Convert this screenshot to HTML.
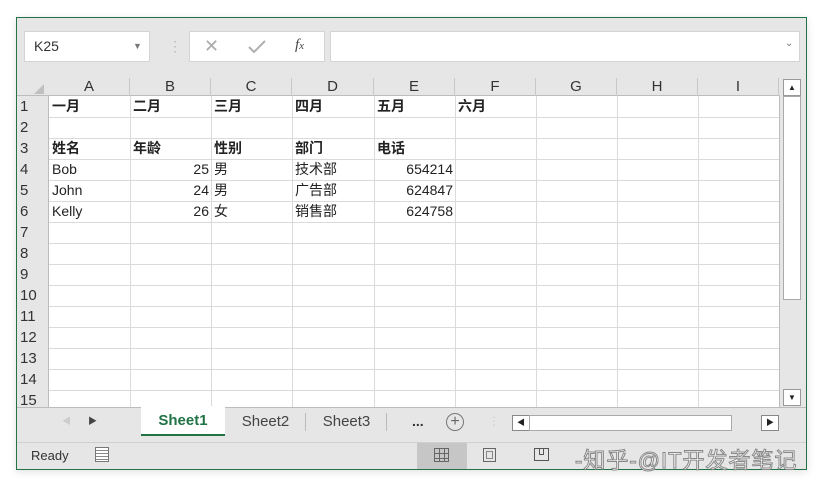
<!DOCTYPE html>
<html><head><meta charset="utf-8"><style>
*{margin:0;padding:0;box-sizing:border-box}
body{width:825px;height:489px;background:#fff;position:relative;overflow:hidden;font-family:"Liberation Sans","Noto Sans CJK SC",sans-serif;font-size:14px;color:#222}
.a{position:absolute}
#win{left:16px;top:17px;width:791px;height:453px;border:1px solid #217346;background:#e6e6e6;box-shadow:0 2px 8px rgba(0,0,0,.12)}
.box{background:#fff;border:1px solid #d4d4d4}
.cell{position:absolute;height:21px;line-height:21px;font-size:14px;white-space:nowrap}
.b{font-weight:bold}
.hl{position:absolute;height:1px;background:#dadada;left:49px;width:730px}
.vl{position:absolute;width:1px;background:#dadada;top:96px;height:311px}
.ch{position:absolute;top:78px;height:18px;line-height:18px;text-align:center;font-size:15px;color:#333;border-right:1px solid #c8c8c8}
.rh{position:absolute;left:17px;width:32px;height:21px;line-height:21px;font-size:15px;color:#333;padding-left:3px}
</style></head><body>
<div id="win" class="a"></div>
<div class="a box" style="left:24px;top:31px;width:126px;height:31px;line-height:29px;padding-left:9px;font-size:14px;color:#333">K25<span class="a" style="left:108px;top:0;font-size:9px;color:#777">▼</span></div>
<div class="a" style="left:168px;top:37px;color:#bbb;font-size:14px;line-height:18px">⋮</div>
<div class="a box" style="left:189px;top:31px;width:136px;height:31px"></div>
<div class="a" style="left:204px;top:36px;color:#aaa;font-size:18px">✕</div>
<svg class="a" style="left:247px;top:39px" width="20" height="16"><path d="M2 8 L7 13 L18 2" stroke="#b0b0b0" stroke-width="2" fill="none"/></svg>
<div class="a" style="left:295px;top:37px;font-family:'Liberation Serif',serif;font-style:italic;font-size:15px;color:#444">f<span style="font-size:11px">x</span></div>
<div class="a box" style="left:330px;top:31px;width:470px;height:31px"></div>
<div class="a" style="left:785px;top:38px;font-size:10px;color:#777">⌄</div>
<div class="a" style="left:17px;top:78px;width:763px;height:18px;background:#e6e6e6;border-bottom:1px solid #bcbcbc"></div>
<div class="a" style="left:17px;top:96px;width:32px;height:311px;background:#e6e6e6;border-right:1px solid #bcbcbc"></div>
<div class="a" style="left:34px;top:84px;width:0;height:0;border-left:10px solid transparent;border-bottom:10px solid #c0c0c0"></div>
<div class="a" style="left:49px;top:96px;width:730px;height:311px;background:#fff"></div>
<div class="ch" style="left:49px;width:81px">A</div>
<div class="ch" style="left:130px;width:81px">B</div>
<div class="ch" style="left:211px;width:81px">C</div>
<div class="ch" style="left:292px;width:82px">D</div>
<div class="ch" style="left:374px;width:81px">E</div>
<div class="ch" style="left:455px;width:81px">F</div>
<div class="ch" style="left:536px;width:81px">G</div>
<div class="ch" style="left:617px;width:81px">H</div>
<div class="ch" style="left:698px;width:81px">I</div>
<div class="vl" style="left:130px"></div><div class="vl" style="left:211px"></div><div class="vl" style="left:292px"></div><div class="vl" style="left:374px"></div><div class="vl" style="left:455px"></div><div class="vl" style="left:536px"></div><div class="vl" style="left:617px"></div><div class="vl" style="left:698px"></div><div class="vl" style="left:779px;background:#bcbcbc"></div>
<div class="hl" style="top:117px"></div><div class="hl" style="top:138px"></div><div class="hl" style="top:159px"></div><div class="hl" style="top:180px"></div><div class="hl" style="top:201px"></div><div class="hl" style="top:222px"></div><div class="hl" style="top:243px"></div><div class="hl" style="top:264px"></div><div class="hl" style="top:285px"></div><div class="hl" style="top:306px"></div><div class="hl" style="top:327px"></div><div class="hl" style="top:348px"></div><div class="hl" style="top:369px"></div><div class="hl" style="top:390px"></div>
<div class="rh" style="top:96px">1</div><div class="rh" style="top:117px">2</div><div class="rh" style="top:138px">3</div><div class="rh" style="top:159px">4</div><div class="rh" style="top:180px">5</div><div class="rh" style="top:201px">6</div><div class="rh" style="top:222px">7</div><div class="rh" style="top:243px">8</div><div class="rh" style="top:264px">9</div><div class="rh" style="top:285px">10</div><div class="rh" style="top:306px">11</div><div class="rh" style="top:327px">12</div><div class="rh" style="top:348px">13</div><div class="rh" style="top:369px">14</div><div class="rh" style="top:390px;height:17px;overflow:hidden">15</div>
<div class="cell b" style="left:52px;top:96px">一月</div><div class="cell b" style="left:133px;top:96px">二月</div><div class="cell b" style="left:214px;top:96px">三月</div><div class="cell b" style="left:295px;top:96px">四月</div><div class="cell b" style="left:377px;top:96px">五月</div><div class="cell b" style="left:458px;top:96px">六月</div>
<div class="cell b" style="left:52px;top:138px">姓名</div><div class="cell b" style="left:133px;top:138px">年龄</div><div class="cell b" style="left:214px;top:138px">性别</div><div class="cell b" style="left:295px;top:138px">部门</div><div class="cell b" style="left:377px;top:138px">电话</div>
<div class="cell" style="left:52px;top:159px">Bob</div><div class="cell" style="left:130px;width:79px;text-align:right;top:159px">25</div><div class="cell" style="left:214px;top:159px">男</div><div class="cell" style="left:295px;top:159px">技术部</div><div class="cell" style="left:374px;width:79px;text-align:right;top:159px">654214</div>
<div class="cell" style="left:52px;top:180px">John</div><div class="cell" style="left:130px;width:79px;text-align:right;top:180px">24</div><div class="cell" style="left:214px;top:180px">男</div><div class="cell" style="left:295px;top:180px">广告部</div><div class="cell" style="left:374px;width:79px;text-align:right;top:180px">624847</div>
<div class="cell" style="left:52px;top:201px">Kelly</div><div class="cell" style="left:130px;width:79px;text-align:right;top:201px">26</div><div class="cell" style="left:214px;top:201px">女</div><div class="cell" style="left:295px;top:201px">销售部</div><div class="cell" style="left:374px;width:79px;text-align:right;top:201px">624758</div>
<div class="a" style="left:783px;top:79px;width:18px;height:328px;background:#e6e6e6"></div>
<div class="a" style="left:783px;top:79px;width:18px;height:17px;background:#fff;border:1px solid #999;font-size:8px;text-align:center;line-height:15px">▲</div>
<div class="a" style="left:783px;top:96px;width:18px;height:204px;background:#fff;border:1px solid #aaa"></div>
<div class="a" style="left:783px;top:389px;width:18px;height:17px;background:#fff;border:1px solid #999;font-size:8px;text-align:center;line-height:15px">▼</div>
<div class="a" style="left:17px;top:407px;width:789px;height:1px;background:#bcbcbc"></div>
<div class="a" style="left:62px;top:414px;color:#ccc;font-size:9px">◀</div>
<div class="a" style="left:88px;top:414px;color:#444;font-size:9px">▶</div>
<div class="a" style="left:141px;top:406px;width:84px;height:30px;background:#fff;border-bottom:2px solid #217346;color:#217346;font-weight:bold;font-size:15px;text-align:center;line-height:30px">Sheet1</div>
<div class="a" style="left:226px;top:413px;width:80px;text-align:center;font-size:15px;color:#444;line-height:18px;border-right:1px solid #bbb">Sheet2</div>
<div class="a" style="left:307px;top:413px;width:80px;text-align:center;font-size:15px;color:#444;line-height:18px;border-right:1px solid #bbb">Sheet3</div>
<div class="a" style="left:412px;top:413px;font-weight:bold;color:#333;font-size:14px">...</div>
<div class="a" style="left:446px;top:413px;width:18px;height:18px;border:1.5px solid #777;border-radius:50%;text-align:center;line-height:15px;font-size:16px;color:#666">+</div>
<div class="a" style="left:488px;top:414px;color:#ccc;font-size:12px">⋮</div>
<div class="a" style="left:512px;top:415px;width:18px;height:16px;background:#fff;border:1px solid #888;font-size:8px;text-align:center;line-height:14px">◀</div>
<div class="a" style="left:529px;top:415px;width:203px;height:16px;background:#fff;border:1px solid #aaa"></div>
<div class="a" style="left:761px;top:415px;width:18px;height:16px;background:#fff;border:1px solid #888;font-size:8px;text-align:center;line-height:14px">▶</div>
<div class="a" style="left:17px;top:442px;width:789px;height:1px;background:#d0d0d0"></div>
<div class="a" style="left:31px;top:448px;font-size:13px;color:#333">Ready</div>
<div class="a" style="left:95px;top:447px;width:14px;height:15px;border:1px solid #777;background:repeating-linear-gradient(#fff 0 2px,#888 2px 3px)"></div>
<div class="a" style="left:417px;top:443px;width:50px;height:26px;background:#c6c6c6"></div>
<div class="a" style="left:434px;top:448px;width:15px;height:14px;border:1px solid #666;background:linear-gradient(90deg,transparent 4px,#666 4px 5px,transparent 5px 9px,#666 9px 10px,transparent 10px),linear-gradient(transparent 4px,#666 4px 5px,transparent 5px 9px,#666 9px 10px,transparent 10px)"></div>
<div class="a" style="left:483px;top:448px;width:13px;height:14px;border:1px solid #666;padding:2px"><div style="border:1px solid #888;height:100%"></div></div>
<div class="a" style="left:534px;top:448px;width:15px;height:13px;border:1px solid #555"><div style="margin:0 auto;width:5px;height:6px;border:1px solid #555;border-top:0"></div></div>
<div class="a" style="left:575px;top:443px;font-size:22px;color:#fff;-webkit-text-stroke:1px #888;letter-spacing:1px;white-space:nowrap">-知乎-@IT开发者笔记</div>
</body></html>
